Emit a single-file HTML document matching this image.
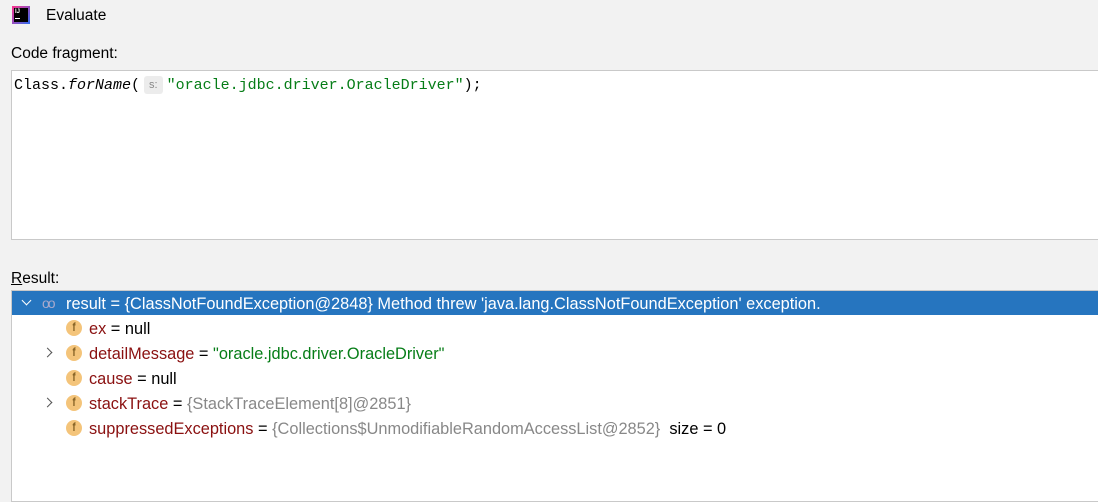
<html><head><style>
body{margin:0;width:1098px;height:493px;background:#f2f2f2;font-family:"Liberation Sans","Noto Sans CJK SC",sans-serif;font-size:16.35px;color:#000;position:relative;overflow:hidden}
.a{position:absolute;white-space:nowrap}
.ed{position:absolute;left:11px;top:70px;width:1090px;height:168px;background:#fff;border:1px solid #c9c9c9}
.rs{position:absolute;left:11px;top:290px;width:1090px;height:210px;background:#fff;border:1px solid #c9c9c9}
.sel{position:absolute;left:12px;top:291px;width:1086px;height:24px;background:#2675bf}
.f{position:absolute;width:16px;height:16px;border-radius:8px;background:#f4c47a;font-size:12px;color:#6a4a10;text-align:center;line-height:15px}
.r{color:#8a1010}
.g{color:#067d17}
.gr{color:#888}
.chev{position:absolute;width:6px;height:6px;border-right:1.5px solid #555;border-bottom:1.5px solid #555;transform:rotate(-45deg)}
</style></head><body>
<div class="a" style="left:12px;top:6px;width:18px;height:18px;background:linear-gradient(135deg,#ff318c,#2c6cf0);"><div style="position:absolute;left:2px;top:2px;width:14px;height:14px;background:#000;color:#fff;font-size:6px;font-weight:bold;line-height:8px;padding-left:1px;box-sizing:border-box">IJ<div style="width:5px;height:1px;background:#fff;margin-top:2px"></div></div></div>
<div class="a" style="left:46px;top:7px;font-size:15.5px">Evaluate</div>
<div class="a" style="left:11px;top:45px;font-size:15.5px">Code fragment:</div>
<div class="ed"></div>
<div class="a" style="left:14px;top:76px;font-family:'Liberation Mono',monospace;font-size:15px">Class.<i>forName</i>(<span style="display:inline-block;background:#ececec;color:#888;font-family:'Liberation Sans';font-size:11px;border-radius:3px;padding:0 5px;margin:0 4px;line-height:18px;vertical-align:1px">s:</span><span class="g">"oracle.jdbc.driver.OracleDriver"</span>);</div>
<div class="a" style="left:11px;top:270px;font-size:15.5px"><u>R</u>esult:</div>
<div class="rs"></div>
<div class="sel"></div>
<div class="chev" style="left:23px;top:297px;transform:rotate(45deg);border-color:#fff"></div>
<div class="a" style="left:42px;top:295px;color:#aac;font-size:14px;letter-spacing:-2px">oo</div>
<div class="a" style="left:66px;top:295px;color:#fff">result = {ClassNotFoundException@2848} Method threw 'java.lang.ClassNotFoundException' exception.</div>
<div class="f" style="left:66px;top:320px">f</div><div class="a" style="left:89px;top:320px"><span class="r">ex</span> = null</div>
<div class="chev" style="left:44px;top:349px"></div>
<div class="f" style="left:66px;top:345px">f</div><div class="a" style="left:89px;top:345px"><span class="r">detailMessage</span> = <span class="g">"oracle.jdbc.driver.OracleDriver"</span></div>
<div class="f" style="left:66px;top:370px">f</div><div class="a" style="left:89px;top:370px"><span class="r">cause</span> = null</div>
<div class="chev" style="left:44px;top:399px"></div>
<div class="f" style="left:66px;top:395px">f</div><div class="a" style="left:89px;top:395px"><span class="r">stackTrace</span> = <span class="gr">{StackTraceElement[8]@2851}</span></div>
<div class="f" style="left:66px;top:420px">f</div><div class="a" style="left:89px;top:420px"><span class="r">suppressedExceptions</span> = <span class="gr">{Collections$UnmodifiableRandomAccessList@2852}</span>&nbsp; size = 0</div>
</body></html>
